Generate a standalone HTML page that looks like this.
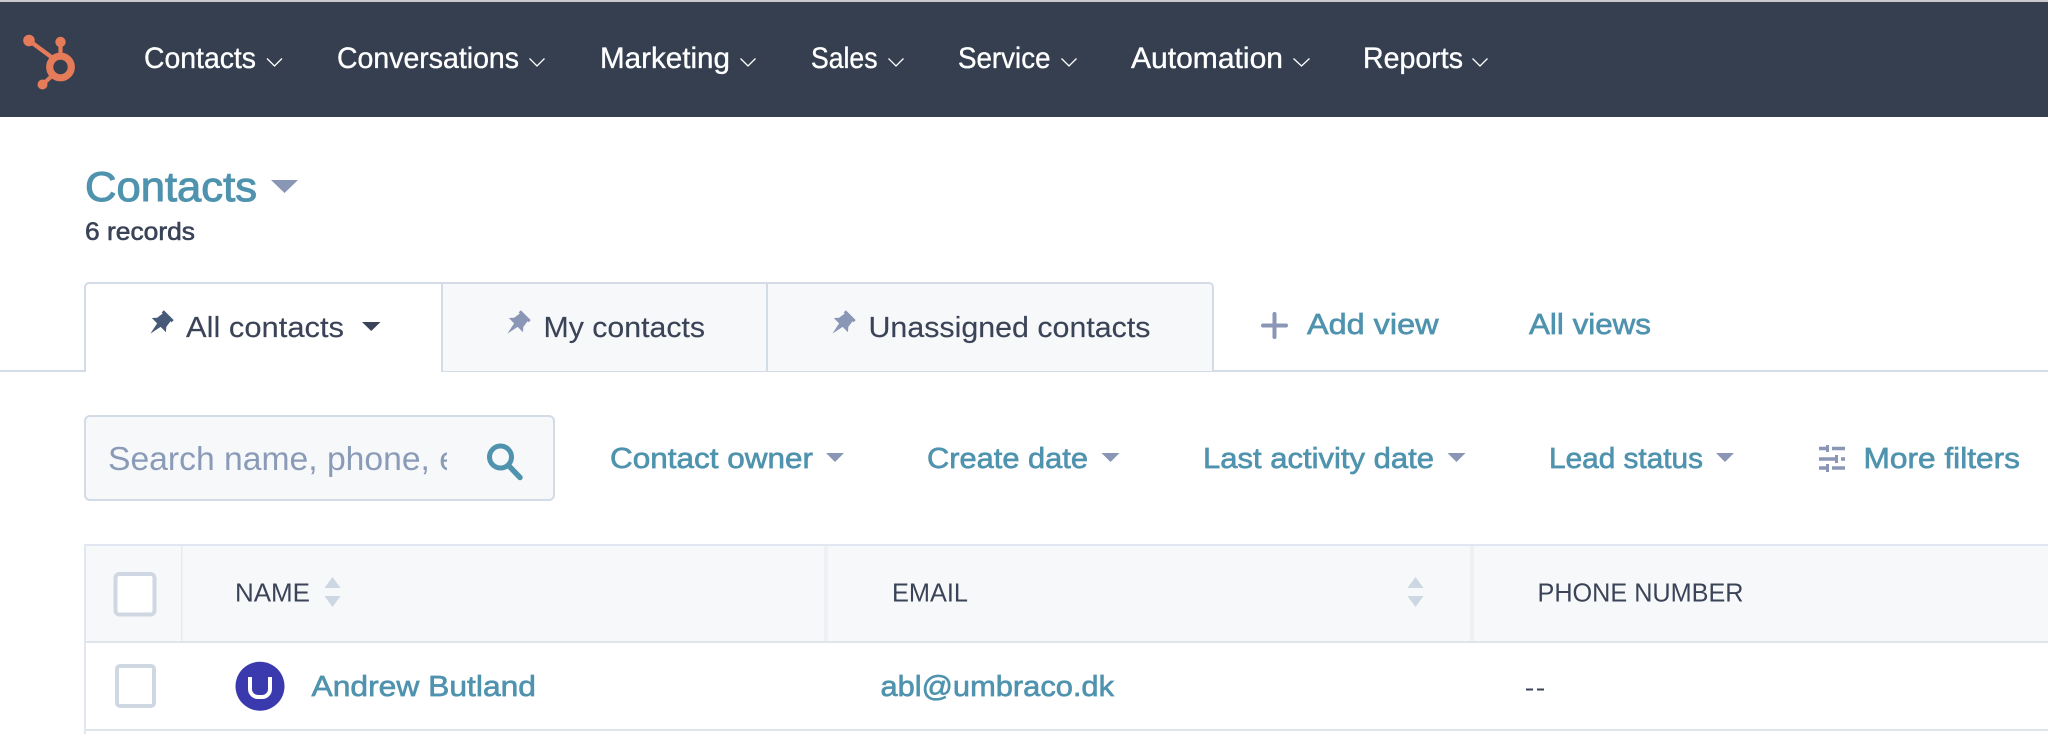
<!DOCTYPE html>
<html lang="en">
<head>
<meta charset="utf-8">
<title>Contacts</title>
<style>
html,body{margin:0;padding:0;background:#fff;width:2048px;height:734px;overflow:hidden}
svg{display:block}
text{font-family:"Liberation Sans",sans-serif}
.nav{font-size:29.500px;fill:#fff;stroke:#fff;stroke-width:.35}
.link{font-size:29px;fill:#4f93ae;stroke:#4f93ae;stroke-width:.65}
.tab{font-size:29px;fill:#3a4357;stroke:#3a4357;stroke-width:.15}
.th{font-size:26px;fill:#3a4357}
</style>
</head>
<body>
<svg xmlns="http://www.w3.org/2000/svg" width="2048" height="734" viewBox="0 0 2048 734">
<defs>
<clipPath id="sc"><rect x="100" y="430" width="347" height="60"/></clipPath>
</defs>
<rect width="2048" height="734" fill="#fff"/>

<!-- top bar -->
<rect y="0" width="2048" height="117" fill="#363f50"/>
<rect y="0" width="2048" height="2" fill="#c9cbcf"/>

<!-- logo -->
<g fill="#e57b59" stroke="none">
<circle cx="29" cy="40.500" r="5.800"/>
<circle cx="60.500" cy="42" r="5.200"/>
<circle cx="42.500" cy="84.500" r="5"/>
</g>
<g fill="none" stroke="#e57b59">
<circle cx="60.500" cy="67" r="10.800" stroke-width="7.200"/>
<path d="M29 40.500L54 59" stroke-width="4.200"/>
<path d="M60.500 42V56" stroke-width="4.200"/>
<path d="M42.500 84.500L53 75" stroke-width="4.200"/>
</g>

<!-- nav -->
<text class="nav" x="144" y="68" textLength="112" lengthAdjust="spacingAndGlyphs">Contacts</text>
<text class="nav" x="337" y="68" textLength="182" lengthAdjust="spacingAndGlyphs">Conversations</text>
<text class="nav" x="600" y="68" textLength="130" lengthAdjust="spacingAndGlyphs">Marketing</text>
<text class="nav" x="811" y="68" textLength="66.500" lengthAdjust="spacingAndGlyphs">Sales</text>
<text class="nav" x="958" y="68" textLength="92.500" lengthAdjust="spacingAndGlyphs">Service</text>
<text class="nav" x="1131" y="68" textLength="152" lengthAdjust="spacingAndGlyphs">Automation</text>
<text class="nav" x="1363" y="68" textLength="100" lengthAdjust="spacingAndGlyphs">Reports</text>
<g fill="none" stroke="#fff" stroke-width="1.300">
<path d="M267 58.500L274.500 66L282 58.500"/>
<path d="M529.500 58.500L537 66L544.500 58.500"/>
<path d="M740.500 58.500L748 66L755.500 58.500"/>
<path d="M888.500 58.500L896 66L903.500 58.500"/>
<path d="M1061.500 58.500L1069 66L1076.500 58.500"/>
<path d="M1293.500 58.500L1301.500 66L1309.500 58.500"/>
<path d="M1472.500 58.500L1480 66L1487.500 58.500"/>
</g>

<!-- title -->
<text x="85" y="201" font-size="42" fill="#4f93ae" stroke="#4f93ae" stroke-width="1" textLength="172" lengthAdjust="spacingAndGlyphs">Contacts</text>
<path d="M271 180H298L284.500 193Z" fill="#8a96b5"/>
<text x="85" y="240" font-size="25" fill="#3a4357" stroke="#3a4357" stroke-width=".6" textLength="110" lengthAdjust="spacingAndGlyphs">6 records</text>

<!-- tabs -->
<rect x="0" y="370" width="2048" height="2" fill="#d3dbe7"/>
<path d="M442 371V287a4 4 0 0 1 4-4H1209a4 4 0 0 1 4 4V371Z" fill="#f6f8fa"/>
<path d="M442 371V283H1209a4 4 0 0 1 4 4V371" fill="none" stroke="#d3dbe7" stroke-width="2"/>
<path d="M767 284V371" stroke="#d3dbe7" stroke-width="2"/>
<path d="M85 372V287a4 4 0 0 1 4-4H442V372Z" fill="#fff"/>
<path d="M85 372V287a4 4 0 0 1 4-4H442V372" fill="none" stroke="#d3dbe7" stroke-width="2"/>
<rect x="86" y="369" width="355" height="4" fill="#fff"/>
<path d="M442 284V372" stroke="#d3dbe7" stroke-width="2"/>

<g transform="translate(161 323) rotate(45)" fill="#475a78">
<path d="M-7 -11H7V-8H5.500L6.500 -1L10 3H2.500L0 15L-2.500 3H-10L-6.500 -1L-5.500 -8H-7Z"/>
</g>
<g transform="translate(518 323) rotate(45)" fill="#8a96b5">
<path d="M-7 -11H7V-8H5.500L6.500 -1L10 3H2.500L0 15L-2.500 3H-10L-6.500 -1L-5.500 -8H-7Z"/>
</g>
<g transform="translate(843 323) rotate(45)" fill="#8a96b5">
<path d="M-7 -11H7V-8H5.500L6.500 -1L10 3H2.500L0 15L-2.500 3H-10L-6.500 -1L-5.500 -8H-7Z"/>
</g>

<text class="tab" x="186" y="337" textLength="158" lengthAdjust="spacingAndGlyphs">All contacts</text>
<path d="M362 322H380.500L371.250 331Z" fill="#3a4357"/>
<text class="tab" x="543.500" y="337" textLength="161.500" lengthAdjust="spacingAndGlyphs">My contacts</text>
<text class="tab" x="868.500" y="337" textLength="282" lengthAdjust="spacingAndGlyphs">Unassigned contacts</text>

<path d="M1263 325.500H1286M1274.500 314V337" stroke="#8a96b5" stroke-width="4" fill="none" stroke-linecap="round"/>
<text class="link" x="1307" y="334" textLength="131.500" lengthAdjust="spacingAndGlyphs">Add view</text>
<text class="link" x="1529" y="334" textLength="122" lengthAdjust="spacingAndGlyphs">All views</text>

<!-- search -->
<rect x="85" y="416" width="469" height="84" rx="5" fill="#f6f8fa" stroke="#d3dbe7" stroke-width="2"/>
<g clip-path="url(#sc)">
<text x="108" y="470" font-size="33" fill="#8a9bb8" textLength="350" lengthAdjust="spacingAndGlyphs">Search name, phone, e</text>
</g>
<circle cx="500.500" cy="457" r="11" fill="none" stroke="#4f93ae" stroke-width="5"/>
<path d="M509 466L520 477.500" stroke="#4f93ae" stroke-width="5.500" stroke-linecap="round"/>

<!-- filters -->
<text class="link" x="610" y="468" textLength="203" lengthAdjust="spacingAndGlyphs">Contact owner</text>
<path d="M826 453H844L835 462Z" fill="#8a96b5"/>
<text class="link" x="927" y="468" textLength="161" lengthAdjust="spacingAndGlyphs">Create date</text>
<path d="M1101.500 453H1119.500L1110.500 462Z" fill="#8a96b5"/>
<text class="link" x="1203" y="468" textLength="231" lengthAdjust="spacingAndGlyphs">Last activity date</text>
<path d="M1447.500 453H1465.500L1456.500 462Z" fill="#8a96b5"/>
<text class="link" x="1549" y="468" textLength="154" lengthAdjust="spacingAndGlyphs">Lead status</text>
<path d="M1716 453H1734L1725 462Z" fill="#8a96b5"/>
<g stroke="#8a96b5" stroke-width="3.500" fill="none">
<path d="M1819 448.500H1826M1832 448.500H1845"/>
<path d="M1827.500 445V452" stroke-width="3"/>
<path d="M1819 459H1835M1841 459H1845"/>
<path d="M1836.500 455V463" stroke-width="3"/>
<path d="M1819 468H1826M1832 468H1845"/>
<path d="M1827.500 464V472" stroke-width="3"/>
</g>
<text class="link" x="1863.500" y="468" textLength="156.500" lengthAdjust="spacingAndGlyphs">More filters</text>

<!-- table -->
<rect x="84" y="546" width="1964" height="95" fill="#f6f8fa"/>
<rect x="84" y="544" width="1964" height="2" fill="#e2e6f0"/>
<rect x="84" y="544" width="2" height="190" fill="#e2e6f0"/>
<rect x="86" y="641" width="1962" height="2" fill="#e0e5ec"/>
<rect x="86" y="729" width="1962" height="2" fill="#e0e5ec"/>
<rect x="181" y="546" width="1.500" height="95" fill="#e6eaf0"/>
<rect x="824" y="546" width="4" height="95" fill="#edf0f5"/>
<rect x="1470" y="546" width="4" height="95" fill="#edf0f5"/>

<rect x="115.500" y="574" width="39" height="40.500" rx="4" fill="#fff" stroke="#cfd7e3" stroke-width="4"/>
<rect x="117" y="666" width="37" height="40" rx="3" fill="#fff" stroke="#cfd7e3" stroke-width="4"/>

<text class="th" x="235" y="601.700" textLength="75" lengthAdjust="spacingAndGlyphs">NAME</text>
<g fill="#cdd6e3">
<path d="M332.500 577L340.500 588H324.500Z"/>
<path d="M324.500 596H340.500L332.500 607Z"/>
<path d="M1415.500 577L1423.500 588H1407.500Z"/>
<path d="M1407.500 596H1423.500L1415.500 607Z"/>
</g>
<text class="th" x="892" y="601.700" textLength="76" lengthAdjust="spacingAndGlyphs">EMAIL</text>
<text class="th" x="1537.500" y="601.700" textLength="206" lengthAdjust="spacingAndGlyphs">PHONE NUMBER</text>

<circle cx="260" cy="686.200" r="24.500" fill="#3a3aae"/>
<path d="M250 677V689a8 8 0 0 0 8 8h4a8 8 0 0 0 8-8V677" fill="none" stroke="#fff" stroke-width="4"/>
<text class="link" x="311.500" y="696" textLength="224.500" lengthAdjust="spacingAndGlyphs">Andrew Butland</text>
<text class="link" x="880.500" y="696" textLength="233.500" lengthAdjust="spacingAndGlyphs">abl@umbraco.dk</text>
<path d="M1526 689.500H1533M1537 689.500H1544" stroke="#3a4357" stroke-width="2" fill="none"/>
</svg>
</body>
</html>
